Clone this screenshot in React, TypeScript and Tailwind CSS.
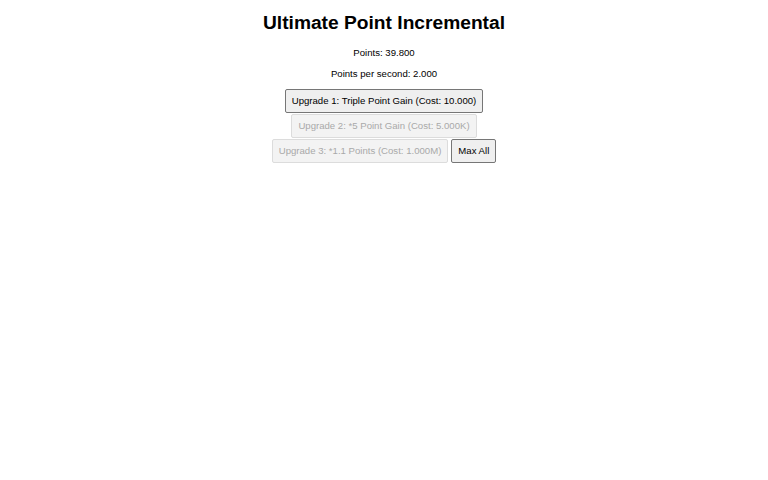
export default function App() {
  const enabled =
    "h-[24px] px-[6px] border border-[#767676] rounded-[2px] bg-[#efefef] text-black text-[9.6px] leading-[11px] whitespace-nowrap";
  const disabled =
    "h-[24px] px-[6px] border border-[#dcdcdc] rounded-[2px] bg-[#f3f3f3] text-[#a9a9a9] text-[9.6px] leading-[11px] whitespace-nowrap";

  return (
    <div
      className="w-[768px] h-[480px] bg-white flex flex-col items-center text-black"
      style={{ fontFamily: '"Liberation Sans", Arial, sans-serif' }}
    >
      <h1 className="mt-[12px] mb-[13px] text-[19.2px] leading-[22px] font-bold">
        Ultimate Point Incremental
      </h1>
      <p className="text-[9.6px] leading-[11px]">Points: 39.800</p>
      <p className="mt-[9.6px] text-[9.6px] leading-[11px]">Points per second: 2.000</p>
      <div className="mt-[10px] flex flex-col items-center gap-[1px]">
        <button className={enabled}>Upgrade 1: Triple Point Gain (Cost: 10.000)</button>
        <button className={disabled} disabled>
          Upgrade 2: *5 Point Gain (Cost: 5.000K)
        </button>
        <div className="flex gap-[3px]">
          <button className={disabled} disabled>
            Upgrade 3: *1.1 Points (Cost: 1.000M)
          </button>
          <button className={enabled}>Max All</button>
        </div>
      </div>
    </div>
  );
}
